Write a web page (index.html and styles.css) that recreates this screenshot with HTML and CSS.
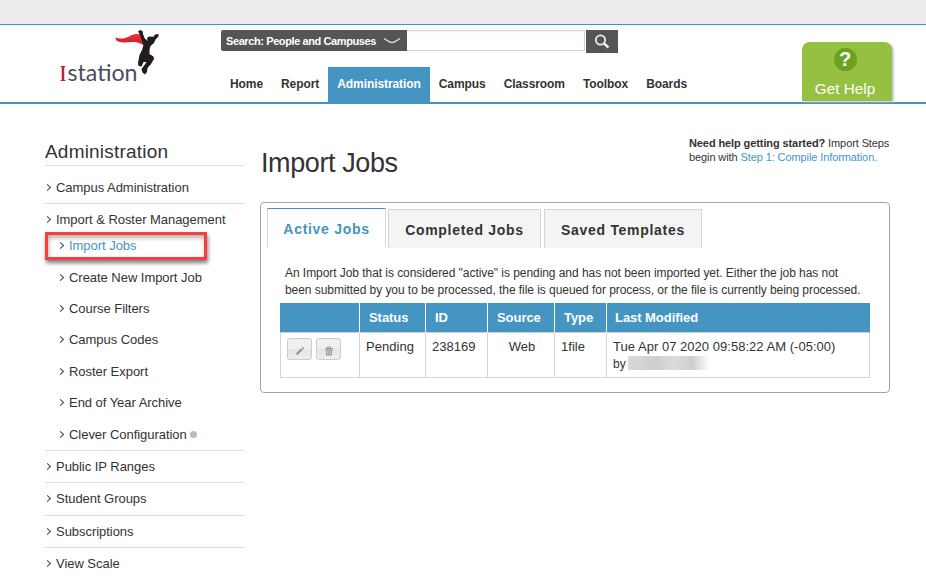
FILE: index.html
```html
<!DOCTYPE html>
<html lang="en">

<head>
    <meta charset="UTF-8">
    <meta name="viewport" content="width=device-width, initial-scale=1.0">
    <title>Istation - Import Jobs</title>
    <link rel="stylesheet" href="styles.css">
</head>

<body>
    <div class="topbar"></div>

    <header class="header">
        <a class="logo" href="#">
            <svg width="120" height="60" viewBox="0 0 120 60">
                <defs>
                    <linearGradient id="cape" x1="0" y1="0" x2="0" y2="1">
                        <stop offset="0" stop-color="#ee3338"/>
                        <stop offset="1" stop-color="#c01820"/>
                    </linearGradient>
                </defs>
                <text x="5" y="56" class="logo-i" textLength="6" lengthAdjust="spacingAndGlyphs">I</text>
                <text x="12.500" y="56" class="logo-text" textLength="70" lengthAdjust="spacingAndGlyphs">station</text>
                <path fill="url(#cape)" d="M60.500 12.500 C65 14.500 71 13.500 75 11 C79 8.500 83 9 86 9.500 L94 19 L93 22.500 C88 20 85 17.500 80 17 C74 16.500 69 18.500 63 16.500 C61 15.500 60.500 14 60.500 12.500 Z"/>
                <path fill="#221c20" d="M83 6.500 L85 5 L87.500 6 L88 9 L89.500 13 L92.500 16 L92 13 L94 11.500 L98.500 11.800 L100 9.500 L103.500 9 L103.500 11.500 L100.500 14.500 L99 18 L95.500 21 L94.500 25 L94.500 29 L98.500 31.500 L99 34 L96 39 L92.500 43 L92 47 L90 49.500 L87.500 47.500 L86.500 44 L89.500 40 L91.500 37 L88.500 37 L86.500 41.500 L83.500 41 L83 38 L84.500 30 L87 25 L88.500 20 L87 16 L85 10 Z"/>
            </svg>
        </a>

        <div class="header-main">
            <form class="search">
                <div class="search-scope">
                    <span>Search: People and Campuses</span>
                    <svg width="18" height="8" viewBox="0 0 18 8"><path d="M1 1.500 L6 4.700 Q9 6.500 12 4.700 L17 1.500" fill="none" stroke="#ddd" stroke-width="1.400"/></svg>
                </div>
                <input type="text" class="search-input">
                <button type="button" class="search-btn">
                    <svg width="16" height="16" viewBox="0 0 16 16"><circle cx="6.500" cy="6" r="4.600" fill="none" stroke="#eee" stroke-width="1.800"/><path d="M10 9.500 L14.500 13.500" stroke="#eee" stroke-width="2.400"/></svg>
                </button>
            </form>

            <nav class="nav">
                <a href="#">Home</a>
                <a href="#">Report</a>
                <a href="#" class="active">Administration</a>
                <a href="#">Campus</a>
                <a href="#">Classroom</a>
                <a href="#">Toolbox</a>
                <a href="#">Boards</a>
            </nav>
        </div>

        <a class="get-help" href="#">
            <span class="help-icon">?</span>
            <span>Get Help</span>
        </a>
    </header>

    <div class="page">
        <aside class="sidebar">
            <h2>Administration</h2>
            <ul class="menu">
                <li><a href="#">Campus Administration</a></li>
                <li class="open">
                    <a href="#">Import &amp; Roster Management</a>
                    <ul class="submenu">
                        <li class="current"><a href="#">Import Jobs</a></li>
                        <li><a href="#">Create New Import Job</a></li>
                        <li><a href="#">Course Filters</a></li>
                        <li><a href="#">Campus Codes</a></li>
                        <li><a href="#">Roster Export</a></li>
                        <li><a href="#">End of Year Archive</a></li>
                        <li><a href="#">Clever Configuration</a><span class="dot"></span></li>
                    </ul>
                </li>
                <li><a href="#">Public IP Ranges</a></li>
                <li><a href="#">Student Groups</a></li>
                <li><a href="#">Subscriptions</a></li>
                <li><a href="#">View Scale</a></li>
            </ul>
        </aside>

        <main class="content">
            <div class="content-head">
                <h1>Import Jobs</h1>
                <p class="help-text"><b>Need help getting started?</b> Import Steps<br>begin with <a href="#">Step 1: Compile Information.</a></p>
            </div>

            <section class="panel">
                <div class="tabs">
                    <a href="#" class="tab tab-active">Active Jobs</a>
                    <a href="#" class="tab tab-completed">Completed Jobs</a>
                    <a href="#" class="tab tab-saved">Saved Templates</a>
                </div>

                <p class="description">An Import Job that is considered "active" is pending and has not been imported yet. Either the job has not<br>been submitted by you to be processed, the file is queued for process, or the file is currently being processed.</p>

                <table class="jobs">
                    <colgroup>
                        <col class="col-actions">
                        <col class="col-status">
                        <col class="col-id">
                        <col class="col-source">
                        <col class="col-type">
                        <col>
                    </colgroup>
                    <thead>
                        <tr>
                            <th></th>
                            <th>Status</th>
                            <th>ID</th>
                            <th>Source</th>
                            <th>Type</th>
                            <th>Last Modified</th>
                        </tr>
                    </thead>
                    <tbody>
                        <tr>
                            <td>
                                <div class="actions">
                                    <button type="button" class="icon-btn" aria-label="Edit">
                                        <svg width="10" height="10" viewBox="0 0 10 10"><path d="M1 9 L1.500 6.800 L6 2.300 L7.700 4 L3.200 8.500 Z M6.600 1.700 L7.600 .8 L9.200 2.400 L8.300 3.400 Z" fill="#999"/></svg>
                                    </button>
                                    <button type="button" class="icon-btn" aria-label="Delete">
                                        <svg width="10" height="10" viewBox="0 0 10 10"><path d="M1 2.500 H9 M3.500 2 V1 H6.500 V2 M2.500 4 V9 H7.500 V4 M4.200 4 V9 M5.800 4 V9 M1.500 4 H8.500" fill="none" stroke="#8c8c8c" stroke-width=".9"/></svg>
                                    </button>
                                </div>
                            </td>
                            <td>Pending</td>
                            <td>238169</td>
                            <td class="center">Web</td>
                            <td>1file</td>
                            <td>Tue Apr 07 2020 09:58:22 AM (-05:00)<div class="by">by <span class="redacted"></span></div></td>
                        </tr>
                    </tbody>
                </table>
            </section>
        </main>
    </div>
</body>

</html>
```
FILE: styles.css
```css
* {
    box-sizing: border-box;
}

body {
    margin: 0;
    height: 578px;
    overflow: hidden;
    font-family: "Liberation Sans", Arial, sans-serif;
    font-size: 13px;
    color: #333;
    background: #fff;
}

a {
    color: inherit;
    text-decoration: none;
}

ul {
    list-style: none;
    margin: 0;
    padding: 0;
}

.topbar {
    height: 25px;
    background: #ededed;
    border-bottom: 1px solid #4495c1;
}

/* header */
.header {
    display: flex;
    height: 79px;
    border-bottom: 2px solid #4495c1;
}

.logo {
    width: 221px;
    padding-left: 55px;
}

.logo-i {
    font-family: "Liberation Serif", serif;
    font-size: 23px;
    font-weight: bold;
    fill: #be1e3c;
}

.logo-text {
    font-family: Lato, sans-serif;
    font-size: 23px;
    fill: #4c4b5e;
}

.header-main {
    width: 581px;
    padding-top: 5px;
}

.search {
    display: flex;
    align-items: flex-start;
    height: 37px;
}

.search-scope {
    display: flex;
    align-items: center;
    justify-content: space-between;
    width: 186px;
    height: 21px;
    padding: 0 6px 0 5px;
    border-radius: 2px 0 0 2px;
    background: #555;
    color: #fff;
    font-size: 11px;
    font-weight: bold;
    letter-spacing: -0.4px;
    white-space: nowrap;
}

.search-input {
    width: 178px;
    height: 21px;
    margin-right: 1px;
    border: 1px solid #d3d3d3;
    border-left: 0;
    box-shadow: inset 0 1px 2px #eee;
}

.search-btn {
    width: 32px;
    height: 23px;
    padding: 3px 0 0;
    border: 0;
    background: #555;
}

.nav {
    display: flex;
    height: 35px;
    line-height: 34px;
    font-size: 12px;
    font-weight: bold;
    letter-spacing: -0.08px;
}

.nav a {
    padding: 0 9px;
}

.nav .active {
    background: #4495c1;
    color: #fff;
}

.get-help {
    display: flex;
    flex-direction: column;
    align-items: center;
    width: 90px;
    height: 59px;
    margin-top: 17px;
    padding: 6px 4px 0 0;
    border-radius: 8px 8px 0 0;
    background: #95c042;
    box-shadow: 2px 1px 2px #ccc;
    color: #fff;
    font-size: 15.3px;
}

.help-icon {
    width: 23px;
    height: 23px;
    margin-bottom: 9px;
    border-radius: 50%;
    background: #69a121;
    font-size: 20px;
    font-weight: bold;
    line-height: 23px;
    text-align: center;
}

.page {
    display: flex;
    padding-left: 45px;
}

/* sidebar */
.sidebar {
    width: 199px;
    padding-top: 36px;
    margin-right: 16px;
}

.sidebar h2 {
    height: 26px;
    margin: 0;
    border-bottom: 1px solid #ddd;
    font-size: 19px;
    font-weight: normal;
    letter-spacing: 0.2px;
    line-height: 24px;
}

.menu > li {
    height: 32.3px;
    padding-top: 6px;
    border-bottom: 1px solid #ddd;
}

.menu > li:first-child {
    height: 38px;
    padding-top: 12px;
}

.menu > .open {
    height: 247px;
    padding-top: 6px;
}

.menu > li:last-child {
    border: 0;
}

.menu a {
    letter-spacing: -0.04px;
    line-height: 20px;
    white-space: nowrap;
}

.menu a::before {
    content: "";
    display: inline-block;
    width: 4px;
    height: 4px;
    margin: 0 6px 2px 0;
    border-top: 1.5px solid #444;
    border-right: 1.5px solid #444;
    transform: rotate(45deg);
}

.submenu {
    padding-top: 2px;
}

.submenu li {
    height: 31.4px;
    padding: 4px 0 0 13px;
}

.submenu .current {
    width: 162px;
    height: 28px;
    margin: 0 0 3.6px;
    padding: 1px 0 0 10px;
    border: 3px solid #f83e3e;
    box-shadow: 1px 3px 4px rgba(0, 0, 0, 0.5), inset 1px 3px 4px rgba(0, 0, 0, 0.3);
    color: #4495c1;
}

.dot {
    display: inline-block;
    width: 7px;
    height: 7px;
    margin: 0 0 1px 3px;
    border-radius: 50%;
    background: #c9b3c3;
}

/* main content */
.content {
    width: 630px;
}

.content-head {
    display: flex;
    justify-content: space-between;
    height: 98px;
}

h1 {
    margin: 43px 0 0 1px;
    font-size: 27px;
    font-weight: normal;
    letter-spacing: -0.4px;
    line-height: 32px;
}

.help-text {
    width: 201px;
    margin: 32px 0 0;
    font-size: 11px;
    letter-spacing: -0.1px;
    line-height: 14px;
    white-space: nowrap;
}

.help-text a {
    color: #4495c1;
}

.panel {
    height: 191px;
    padding: 5px 19px 0;
    border: 1px solid #a5a5a5;
    border-radius: 4px;
}

.tabs {
    display: flex;
    gap: 3px;
    margin-left: -13px;
}

.tab {
    height: 39px;
    margin-top: 1px;
    border: 1px solid #d5d5d5;
    border-bottom: 0;
    background: #f4f4f4;
    font-size: 14px;
    font-weight: bold;
    letter-spacing: 0.7px;
    line-height: 40px;
    text-align: center;
    white-space: nowrap;
}

.tab-active {
    width: 119px;
    margin: 0 -1px 1px 0;
    border-top-color: #4495c1;
    background: #fff;
    color: #4495c1;
}

.tab-completed {
    width: 153px;
}

.tab-saved {
    width: 158px;
}

.description {
    margin: 17px 0 4px 5px;
    font-size: 12px;
    letter-spacing: -0.055px;
    line-height: 17px;
    white-space: nowrap;
}

.jobs {
    width: 590px;
    table-layout: fixed;
    border-spacing: 0;
}

.col-actions {
    width: 80px;
}

.col-status {
    width: 66px;
}

.col-id {
    width: 62px;
}

.col-source {
    width: 67px;
}

.col-type {
    width: 52px;
}

.jobs th {
    height: 30px;
    padding: 0 0 0 9px;
    border-right: 1px solid #fff;
    border-bottom: 1px solid #ccc;
    background: #4495c1;
    color: #fff;
    font-size: 13px;
    letter-spacing: -0.05px;
    text-align: left;
}

.jobs th:last-child {
    padding-left: 8px;
    border-right: 0;
}

.jobs td {
    height: 45px;
    padding: 6px 0 0 6px;
    border-right: 1px solid #d5d5d5;
    border-bottom: 1px solid #d5d5d5;
    letter-spacing: 0.03px;
    line-height: 16px;
    vertical-align: top;
    white-space: nowrap;
}

.jobs td:first-child {
    padding-top: 5px;
    border-left: 1px solid #d5d5d5;
}

.jobs .center {
    padding-left: 2px;
    text-align: center;
}

.actions {
    display: flex;
    gap: 4px;
}

.icon-btn {
    width: 25px;
    height: 22px;
    padding: 3px 0 0;
    border: 1px solid #ccc;
    border-radius: 3px;
    background: linear-gradient(#f0f0f0 50%, #e4e4e4 50%, #eee);
    line-height: 0;
}

.by {
    display: flex;
    gap: 2px;
    padding-top: 1px;
    font-size: 12px;
}

.redacted {
    width: 82px;
    height: 14px;
    background: linear-gradient(90deg, #d9d9d9, #cfcdd1 35%, #dcdcdc 55%, #cecece 78%, #fff);
}
```
